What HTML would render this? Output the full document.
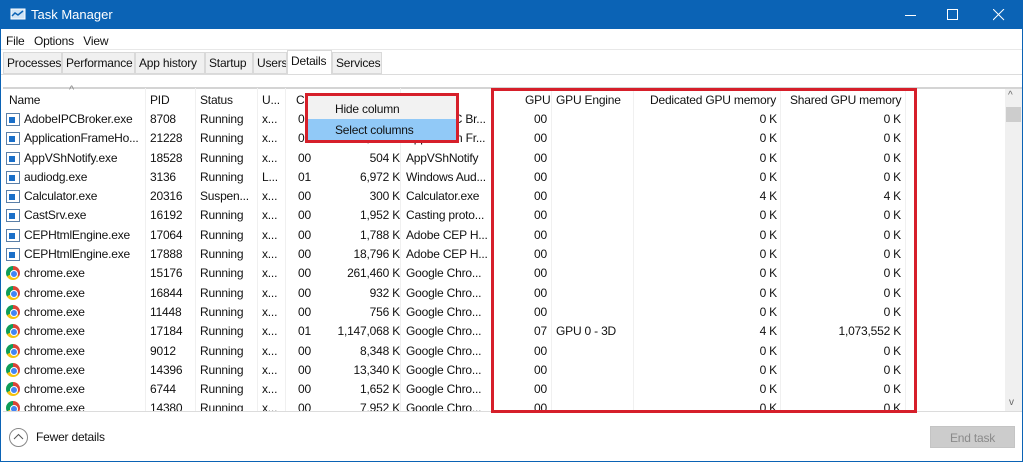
<!DOCTYPE html>
<html><head><meta charset="utf-8"><style>
*{margin:0;padding:0;box-sizing:border-box}
body{width:1023px;height:462px;overflow:hidden;background:#fff;font-family:"Liberation Sans",sans-serif;font-size:12px;letter-spacing:-0.2px;color:#111;position:relative}
.abs{position:absolute;white-space:nowrap}
#title{left:0;top:0;width:1023px;height:29px;background:#0b63b5;color:#fff;font-size:13px;letter-spacing:0}
#win{left:0;top:29px;width:1023px;height:433px;border:1px solid #0b63b5;border-top:none}
.tab{position:absolute;top:52px;height:22px;line-height:21px;padding:0 3px;background:#f0f0f0;border:1px solid #d9d9d9;white-space:nowrap;overflow:hidden}
.rows{position:absolute;left:3px;top:110px;width:1002px;height:301px;overflow:hidden}
.r{position:relative;height:19.3px;line-height:19.3px}
.r span{position:absolute;white-space:nowrap}
.n{left:21px}.p{left:147px}.s{left:197px}.u{left:259px}.c{left:295px}
.m{left:300px;width:97px;text-align:right}.d{left:403px}
.g{left:480px;width:64px;text-align:right}.e{left:553px}
.dm{left:640px;width:134px;text-align:right}.sm{left:790px;width:108px;text-align:right}
.ic{left:3px;top:3px;width:14px;height:13px;background:#fff;border:1px solid #5a7fa8}
.ic::after{content:"";position:absolute;left:2px;top:3px;width:6px;height:6px;background:#1a6fc9}
.ch{left:3px;top:2px;width:14px;height:14px;border-radius:50%;background:conic-gradient(#db4437 0 120deg,#f4c20d 120deg 240deg,#0f9d58 240deg 360deg)}
.ch::after{content:"";position:absolute;left:4px;top:4px;width:6px;height:6px;border-radius:50%;background:#4285f4;border:1px solid #fff}
.vl{position:absolute;top:88px;width:1px;height:323px;background:#f0f0f0}
.hd{position:absolute;top:93px;white-space:nowrap}
</style></head><body>
<div id="title" class="abs">
 <svg style="position:absolute;left:10px;top:8px" width="16" height="13"><rect x="1" y="1" width="14" height="10" fill="#cfe3f5" stroke="#fff"/><path d="M2 8 L5 5 L8 7 L13 3" stroke="#0b63b5" fill="none" stroke-width="1.5"/></svg>
 <span style="position:absolute;left:31px;top:7px">Task Manager</span>
 <svg style="position:absolute;left:905px;top:9px" width="12" height="12"><path d="M0 6.5H11" stroke="#fff"/></svg>
 <svg style="position:absolute;left:947px;top:9px" width="12" height="12"><rect x="0.5" y="0.5" width="10" height="10" stroke="#fff" fill="none"/></svg>
 <svg style="position:absolute;left:993px;top:9px" width="12" height="12"><path d="M0 0L11 11M11 0L0 11" stroke="#fff"/></svg>
</div>
<div id="win" class="abs"></div>
<div class="abs" style="left:6px;top:34px">File&nbsp;&nbsp; Options&nbsp;&nbsp; View</div>
<div class="abs" style="left:1px;top:49px;width:1021px;height:1px;background:#e8e8e8"></div>
<div class="tab" style="left:3px;width:59px">Processes</div>
<div class="tab" style="left:62px;width:73px">Performance</div>
<div class="tab" style="left:135px;width:70px">App history</div>
<div class="tab" style="left:205px;width:48px">Startup</div>
<div class="tab" style="left:253px;width:34px">Users</div>
<div class="tab" style="left:287px;top:50px;height:25px;width:45px;background:#fff;border-bottom:none">Details</div>
<div class="tab" style="left:332px;width:50px">Services</div>
<div class="abs" style="left:1px;top:74px;width:1021px;height:1px;background:#dcdcdc"></div>
<div class="abs" style="left:3px;top:87px;width:1019px;height:2px;background:#d4d4d4"></div>
<div class="vl" style="left:145px"></div><div class="vl" style="left:195px"></div><div class="vl" style="left:257px"></div><div class="vl" style="left:285px"></div><div class="vl" style="left:400px"></div><div class="vl" style="left:551px"></div><div class="vl" style="left:633px"></div><div class="vl" style="left:780px"></div><div class="vl" style="left:905px"></div>
<div class="hd" style="left:9px">Name</div>
<div class="abs" style="left:69px;top:84px;font-size:11px;color:#888">^</div>
<div class="hd" style="left:150px">PID</div>
<div class="hd" style="left:200px">Status</div>
<div class="hd" style="left:262px">U...</div>
<div class="hd" style="left:296px">C</div>
<div class="hd" style="left:525px">GPU</div>
<div class="hd" style="left:556px">GPU Engine</div>
<div class="hd" style="left:650px">Dedicated GPU memory</div>
<div class="hd" style="left:790px">Shared GPU memory</div>
<div class="rows">
<div class="r"><span class="ic"></span><span class="n">AdobeIPCBroker.exe</span><span class="p">8708</span><span class="s">Running</span><span class="u">x...</span><span class="c">00</span><span class="d">Adobe IPC Br...</span><span class="g">00</span><span class="dm">0 K</span><span class="sm">0 K</span></div>
<div class="r"><span class="ic"></span><span class="n">ApplicationFrameHo...</span><span class="p">21228</span><span class="s">Running</span><span class="u">x...</span><span class="c">00</span><span class="m">1,124 K</span><span class="d">Application Fr...</span><span class="g">00</span><span class="dm">0 K</span><span class="sm">0 K</span></div>
<div class="r"><span class="ic"></span><span class="n">AppVShNotify.exe</span><span class="p">18528</span><span class="s">Running</span><span class="u">x...</span><span class="c">00</span><span class="m">504 K</span><span class="d">AppVShNotify</span><span class="g">00</span><span class="dm">0 K</span><span class="sm">0 K</span></div>
<div class="r"><span class="ic"></span><span class="n">audiodg.exe</span><span class="p">3136</span><span class="s">Running</span><span class="u">L...</span><span class="c">01</span><span class="m">6,972 K</span><span class="d">Windows Aud...</span><span class="g">00</span><span class="dm">0 K</span><span class="sm">0 K</span></div>
<div class="r"><span class="ic"></span><span class="n">Calculator.exe</span><span class="p">20316</span><span class="s">Suspen...</span><span class="u">x...</span><span class="c">00</span><span class="m">300 K</span><span class="d">Calculator.exe</span><span class="g">00</span><span class="dm">4 K</span><span class="sm">4 K</span></div>
<div class="r"><span class="ic"></span><span class="n">CastSrv.exe</span><span class="p">16192</span><span class="s">Running</span><span class="u">x...</span><span class="c">00</span><span class="m">1,952 K</span><span class="d">Casting proto...</span><span class="g">00</span><span class="dm">0 K</span><span class="sm">0 K</span></div>
<div class="r"><span class="ic"></span><span class="n">CEPHtmlEngine.exe</span><span class="p">17064</span><span class="s">Running</span><span class="u">x...</span><span class="c">00</span><span class="m">1,788 K</span><span class="d">Adobe CEP H...</span><span class="g">00</span><span class="dm">0 K</span><span class="sm">0 K</span></div>
<div class="r"><span class="ic"></span><span class="n">CEPHtmlEngine.exe</span><span class="p">17888</span><span class="s">Running</span><span class="u">x...</span><span class="c">00</span><span class="m">18,796 K</span><span class="d">Adobe CEP H...</span><span class="g">00</span><span class="dm">0 K</span><span class="sm">0 K</span></div>
<div class="r"><span class="ch"></span><span class="n">chrome.exe</span><span class="p">15176</span><span class="s">Running</span><span class="u">x...</span><span class="c">00</span><span class="m">261,460 K</span><span class="d">Google Chro...</span><span class="g">00</span><span class="dm">0 K</span><span class="sm">0 K</span></div>
<div class="r"><span class="ch"></span><span class="n">chrome.exe</span><span class="p">16844</span><span class="s">Running</span><span class="u">x...</span><span class="c">00</span><span class="m">932 K</span><span class="d">Google Chro...</span><span class="g">00</span><span class="dm">0 K</span><span class="sm">0 K</span></div>
<div class="r"><span class="ch"></span><span class="n">chrome.exe</span><span class="p">11448</span><span class="s">Running</span><span class="u">x...</span><span class="c">00</span><span class="m">756 K</span><span class="d">Google Chro...</span><span class="g">00</span><span class="dm">0 K</span><span class="sm">0 K</span></div>
<div class="r"><span class="ch"></span><span class="n">chrome.exe</span><span class="p">17184</span><span class="s">Running</span><span class="u">x...</span><span class="c">01</span><span class="m">1,147,068 K</span><span class="d">Google Chro...</span><span class="g">07</span><span class="e">GPU 0 - 3D</span><span class="dm">4 K</span><span class="sm">1,073,552 K</span></div>
<div class="r"><span class="ch"></span><span class="n">chrome.exe</span><span class="p">9012</span><span class="s">Running</span><span class="u">x...</span><span class="c">00</span><span class="m">8,348 K</span><span class="d">Google Chro...</span><span class="g">00</span><span class="dm">0 K</span><span class="sm">0 K</span></div>
<div class="r"><span class="ch"></span><span class="n">chrome.exe</span><span class="p">14396</span><span class="s">Running</span><span class="u">x...</span><span class="c">00</span><span class="m">13,340 K</span><span class="d">Google Chro...</span><span class="g">00</span><span class="dm">0 K</span><span class="sm">0 K</span></div>
<div class="r"><span class="ch"></span><span class="n">chrome.exe</span><span class="p">6744</span><span class="s">Running</span><span class="u">x...</span><span class="c">00</span><span class="m">1,652 K</span><span class="d">Google Chro...</span><span class="g">00</span><span class="dm">0 K</span><span class="sm">0 K</span></div>
<div class="r"><span class="ch"></span><span class="n">chrome.exe</span><span class="p">14380</span><span class="s">Running</span><span class="u">x...</span><span class="c">00</span><span class="m">7,952 K</span><span class="d">Google Chro...</span><span class="g">00</span><span class="dm">0 K</span><span class="sm">0 K</span></div>
</div>
<div class="abs" style="left:1005px;top:89px;width:17px;height:322px;background:#f0f0f0"></div>
<div class="abs" style="left:1008px;top:90px;font-size:10px;color:#666">&#94;</div>
<div class="abs" style="left:1006px;top:107px;width:15px;height:15px;background:#cdcdcd"></div>
<div class="abs" style="left:1009px;top:397px;font-size:10px;color:#666">v</div>
<div class="abs" style="left:3px;top:411px;width:1019px;height:1px;background:#dcdcdc"></div>
<div class="abs" style="left:305px;top:93px;width:154px;height:50px;background:#f2f2f2;border:3px solid #d61f2a">
 <div style="position:absolute;left:0;top:23px;width:148px;height:21px;background:#91c9f7"></div>
 <div style="position:absolute;left:27px;top:6px">Hide column</div>
 <div style="position:absolute;left:27px;top:27px">Select columns</div>
</div>
<div class="abs" style="left:491px;top:88px;width:426px;height:325px;border:3px solid #d61f2a"></div>
<div class="abs" style="left:9px;top:428px;width:19px;height:19px;border:1px solid #888;border-radius:50%"></div>
<svg class="abs" style="left:13px;top:433px" width="11" height="8"><path d="M1 6L5.5 1.5L10 6" stroke="#555" fill="none"/></svg>
<div class="abs" style="left:36px;top:430px">Fewer details</div>
<div class="abs" style="left:930px;top:426px;width:85px;height:22px;background:#cccccc;color:#8a8a8a;text-align:center;line-height:22px;border:1px solid #c4c4c4">End task</div>
</body></html>
